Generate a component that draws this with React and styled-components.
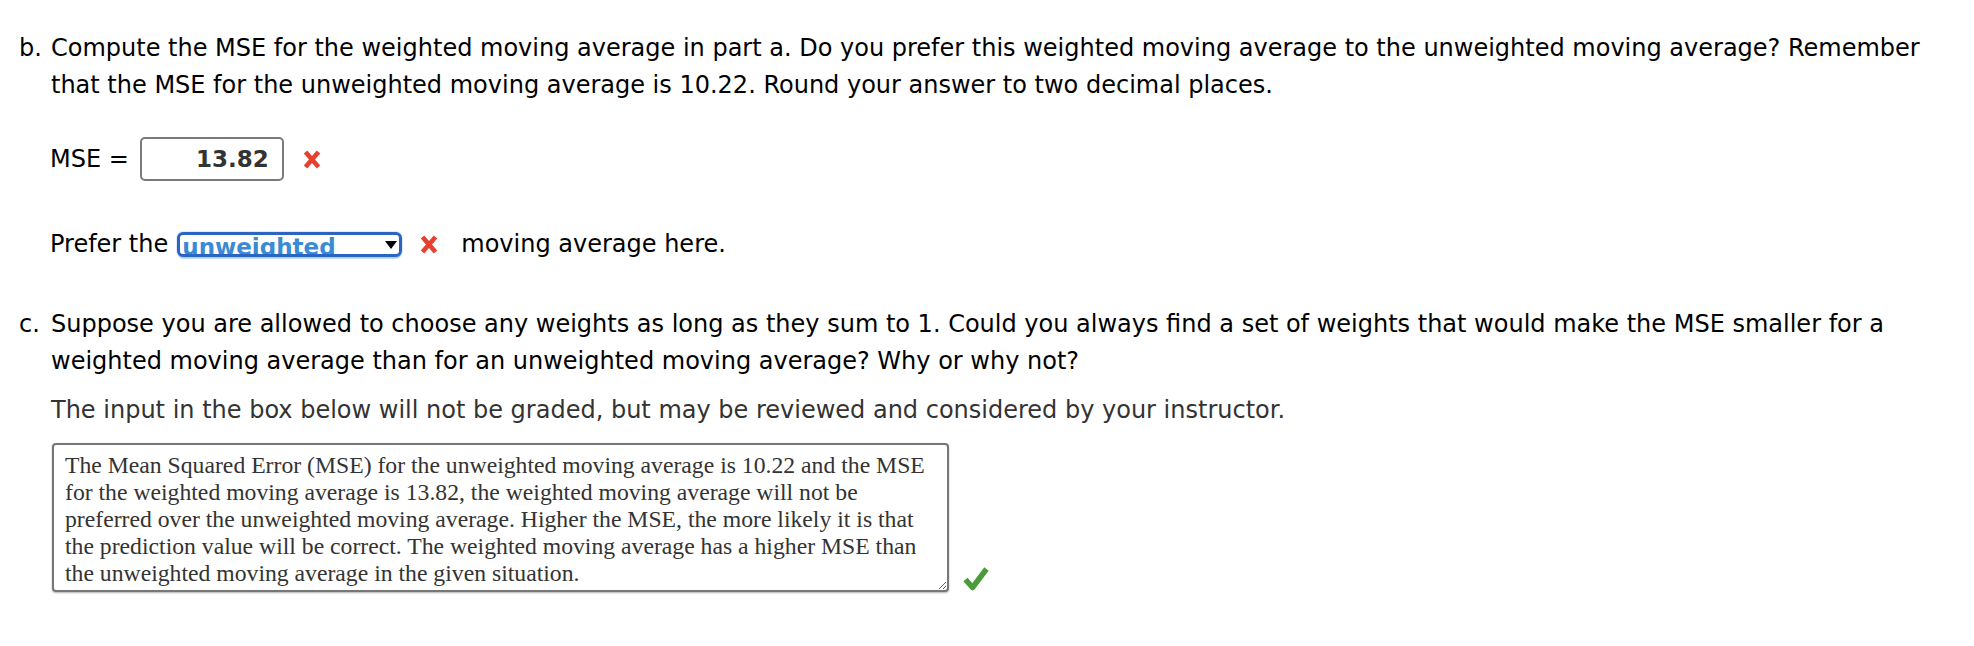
import React from 'react';
import styled, { createGlobalStyle } from 'styled-components';

const GlobalStyle = createGlobalStyle`
  body {
    margin: 0;
    background: #fff;
    font-family: 'DejaVu Sans', Verdana, sans-serif;
    color: #000;
  }
`;

const Page = styled.div`
  padding: 30px 0 40px 19px;
`;

const Part = styled.div`
  display: grid;
  grid-template-columns: 32px auto;
  font-size: 24px;
  line-height: 37px;
  white-space: nowrap;
  margin-bottom: ${(p) => p.$gap || 0}px;
`;

const Marker = styled.span``;

const Body = styled.div``;

const AnswerRow = styled.div`
  display: flex;
  align-items: center;
  padding-left: 31px;
  font-size: 24px;
  margin-bottom: ${(p) => p.$gap || 0}px;
`;

const Label = styled.span`
  margin-right: ${(p) => p.$gap || 0}px;
`;

const NumberBox = styled.input`
  box-sizing: border-box;
  width: 144px;
  height: 44px;
  padding: 0 13px 0 0;
  border: 2px solid #7a7a7a;
  border-radius: 5px;
  font-family: 'DejaVu Sans', Verdana, sans-serif;
  font-size: 23px;
  font-weight: bold;
  color: #333;
  text-align: right;
  background: #fff;
  outline: none;
`;

const Select = styled.span`
  position: relative;
  box-sizing: border-box;
  display: inline-block;
  width: 225px;
  height: 25px;
  border: 3px solid #2a64c5;
  border-radius: 6px;
  overflow: hidden;
  box-shadow: 0 0 0 1px rgba(90, 150, 220, 0.18), 0 3px 0 -1px rgba(90, 150, 220, 0.35);
  background: #fff;
`;

const SelectText = styled.span`
  position: absolute;
  left: 2px;
  top: -2px;
  font-size: 23px;
  font-weight: bold;
  line-height: 28px;
  color: #3b8ad6;
  text-decoration: underline;
  white-space: nowrap;
`;

const Caret = styled.span`
  position: absolute;
  right: 2px;
  top: 6px;
  width: 0;
  height: 0;
  border-left: 6px solid transparent;
  border-right: 6px solid transparent;
  border-top: 8px solid #000;
`;

const Mark = styled.svg`
  flex: none;
  margin: 0 ${(p) => p.$right || 0}px 0 ${(p) => p.$left || 0}px;
`;

const Note = styled.p`
  margin: 0 0 14px 32px;
  font-size: 24px;
  line-height: 37px;
  color: #333;
  white-space: nowrap;
`;

const AnswerArea = styled.div`
  display: flex;
  align-items: flex-end;
  padding-left: 33px;
`;

const TextArea = styled.textarea`
  box-sizing: border-box;
  width: 897px;
  height: 149px;
  padding: 7px 2px 0 11px;
  border: 2px solid #777;
  border-radius: 4px;
  box-shadow: 0 1px 2px rgba(0, 0, 0, 0.3);
  font-family: 'Liberation Serif', 'Times New Roman', serif;
  font-size: 23.7px;
  line-height: 27px;
  color: #333;
  background: #fff;
  outline: none;
  overflow: hidden;
`;

const CrossIcon = ({ left, right }) => (
  <Mark $left={left} $right={right} width="18" height="19" viewBox="0 0 18 19">
    <path d="M2.5 2 L15.5 17 M15.5 2 L2.5 17" stroke="#e6402f" strokeWidth="4.6" strokeLinecap="butt" fill="none" />
  </Mark>
);

const CheckIcon = () => (
  <Mark $left={14} width="26" height="27" viewBox="0 0 26 27">
    <path d="M2.5 14.5 L9.5 22.5 L23.5 4" stroke="#4b9a3c" strokeWidth="5.5" strokeLinejoin="round" fill="none" />
  </Mark>
);

const answerText = [
  'The Mean Squared Error (MSE) for the unweighted moving average is 10.22 and the MSE',
  'for the weighted moving average is 13.82, the weighted moving average will not be',
  'preferred over the unweighted moving average. Higher the MSE, the more likely it is that',
  'the prediction value will be correct. The weighted moving average has a higher MSE than',
  'the unweighted moving average in the given situation.',
].join('\n');

export default function App() {
  return (
    <>
      <GlobalStyle />
      <Page>
        <Part $gap={33}>
          <Marker>b.</Marker>
          <Body>
            Compute the MSE for the weighted moving average in part a. Do you prefer this weighted moving average to the unweighted moving average? Remember
            <br />
            that the MSE for the unweighted moving average is 10.22. Round your answer to two decimal places.
          </Body>
        </Part>

        <AnswerRow $gap={49}>
          <Label $gap={11}>MSE =</Label>
          <NumberBox readOnly value="13.82" />
          <CrossIcon left={19} />
        </AnswerRow>

        <AnswerRow $gap={48}>
          <Label $gap={9}>Prefer the</Label>
          <Select>
            <SelectText>unweighted</SelectText>
            <Caret />
          </Select>
          <CrossIcon left={18} right={23} />
          <span>moving average here.</span>
        </AnswerRow>

        <Part $gap={12}>
          <Marker>c.</Marker>
          <Body>
            Suppose you are allowed to choose any weights as long as they sum to 1. Could you always find a set of weights that would make the MSE smaller for a
            <br />
            weighted moving average than for an unweighted moving average? Why or why not?
          </Body>
        </Part>

        <Note>The input in the box below will not be graded, but may be reviewed and considered by your instructor.</Note>

        <AnswerArea>
          <TextArea readOnly value={answerText} />
          <CheckIcon />
        </AnswerArea>
      </Page>
    </>
  );
}
